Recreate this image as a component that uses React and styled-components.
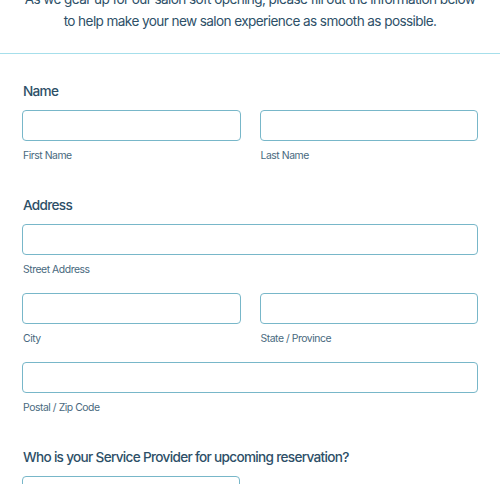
import React from "react";
import styled, { createGlobalStyle } from "styled-components";

const Global = createGlobalStyle`
  html, body { margin: 0; padding: 0; background: #ffffff; }
  body { font-family: Inter, "Noto Sans", sans-serif; overflow: hidden; }
`;

const Page = styled.div`
  width: 500px;
  height: 484px;
  overflow: hidden;
  background: #fff;
`;

const Intro = styled.p`
  margin: -12px 0 0;
  padding: 0 8px 21px;
  text-align: center;
  font-size: 13.6px;
  line-height: 22px;
  color: #2e5068;
  letter-spacing: -0.6px;
`;

const Divider = styled.hr`
  margin: 0;
  border: none;
  border-top: 1.5px solid #a6dfeb;
`;

const Form = styled.form`
  display: flex;
  flex-direction: column;
  gap: 31px;
  padding: 27px 22px 0;
`;

const Section = styled.section`
  display: flex;
  flex-direction: column;
`;

const Heading = styled.div`
  font-size: 13.6px;
  line-height: 20px;
  font-weight: 500;
  color: #2d4f67;
  letter-spacing: -0.69px;
  margin: 0 0 9px 1px;
`;

const Row = styled.div`
  display: grid;
  grid-template-columns: ${(p) => (p.$half ? "218px" : p.$cols === 2 ? "1fr 1fr" : "1fr")};
  column-gap: 19px;
`;

const Field = styled.div`
  display: flex;
  flex-direction: column;
`;

const Input = styled.input`
  box-sizing: border-box;
  height: 31px;
  width: 100%;
  border: 1.5px solid #78b7c9;
  border-radius: 4px;
  background: #fff;
  padding: 0 8px;
  font-family: inherit;
  font-size: 13px;
  outline: none;
`;

const Sub = styled.label`
  margin: 7px 0 0 1px;
  font-size: 10.4px;
  line-height: 16px;
  letter-spacing: -0.45px;
  color: #48697e;
`;

const Rows = styled.div`
  display: flex;
  flex-direction: column;
  gap: 15px;
`;

export default function App() {
  return (
    <Page>
      <Global />
      <Intro>
        As we gear up for our salon soft opening, please fill out the information below
        <br />
        to help make your new salon experience as smooth as possible.
      </Intro>
      <Divider />
      <Form>
        <Section>
          <Heading>Name</Heading>
          <Row $cols={2}>
            <Field>
              <Input />
              <Sub>First Name</Sub>
            </Field>
            <Field>
              <Input />
              <Sub>Last Name</Sub>
            </Field>
          </Row>
        </Section>
        <Section>
          <Heading>Address</Heading>
          <Rows>
            <Row>
              <Field>
                <Input />
                <Sub>Street Address</Sub>
              </Field>
            </Row>
            <Row $cols={2}>
              <Field>
                <Input />
                <Sub>City</Sub>
              </Field>
              <Field>
                <Input />
                <Sub>State / Province</Sub>
              </Field>
            </Row>
            <Row>
              <Field>
                <Input />
                <Sub>Postal / Zip Code</Sub>
              </Field>
            </Row>
          </Rows>
        </Section>
        <Section>
          <Heading>Who is your Service Provider for upcoming reservation?</Heading>
          <Row $half>
            <Field>
              <Input />
            </Field>
          </Row>
        </Section>
      </Form>
    </Page>
  );
}
